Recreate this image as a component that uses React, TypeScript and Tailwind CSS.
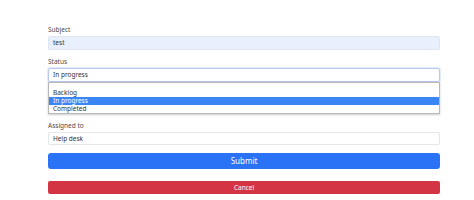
export default function App() {
  const font = { fontFamily: '"Noto Sans", "Open Sans", sans-serif' };
  return (
    <div className="w-[474px] h-[200px] bg-white overflow-hidden" style={font}>
      <div className="ml-[48px] w-[392px] pt-[26px] flex flex-col text-[#4a4a4a]">
        <label className="text-[6.5px] leading-[8px] mb-[2px]">Subject</label>
        <div className="h-[14px] rounded-[2px] bg-[#e8f0fe] border border-[#e0e6f0] flex items-center pl-[4px] text-[6.5px] text-[#333]">test</div>
        <label className="text-[6.5px] leading-[8px] mt-[8px] mb-[2px]">Status</label>
        <div className="h-[14px] rounded-[2px] bg-white border border-[#b9c8ef] shadow-[0_0_0_1px_rgba(13,110,253,0.12)] flex items-center pl-[4px] text-[6.5px] text-[#333]">In progress</div>
        <div className="border border-[#b8b8b8] shadow-[0_1px_2px_rgba(0,0,0,0.2)] bg-white flex flex-col text-[6.5px] text-[#333]">
          <div className="h-[6px]" />
          <div className="h-[8px] flex items-center pl-[4px]">Backlog</div>
          <div className="h-[8px] flex items-center pl-[4px] bg-[#3b86f5] text-white">In progress</div>
          <div className="h-[8px] flex items-center pl-[4px]">Completed</div>
        </div>
        <label className="text-[6.5px] leading-[8px] mt-[8px] mb-[2px]">Assigned to</label>
        <div className="h-[13px] rounded-[2px] bg-white border border-[#e3e6ea] flex items-center pl-[4px] text-[6.5px] text-[#333]">Help desk</div>
        <button className="mt-[8px] h-[16px] rounded-[3px] bg-[#2a72f6] text-white text-[8px] leading-[16px]">Submit</button>
        <button className="mt-[12px] h-[13px] rounded-[2px] bg-[#d43545] text-white text-[6.5px] leading-[13px]">Cancel</button>
      </div>
    </div>
  );
}
